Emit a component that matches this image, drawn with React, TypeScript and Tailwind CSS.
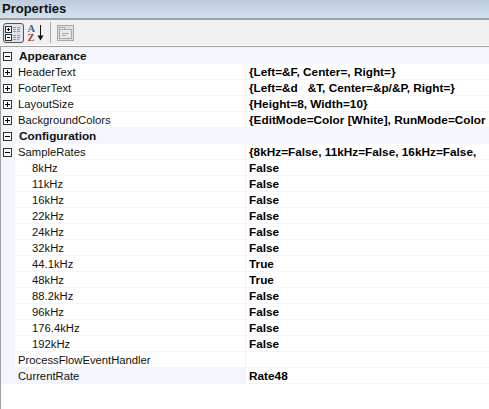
import React from "react";

const font = "[font-family:'Liberation_Sans',Arial,sans-serif]";

function Box({ open }: { open: boolean }) {
  return (
    <svg width="9" height="9" viewBox="0 0 9 9" className="block" shapeRendering="crispEdges">
      <rect x="0.5" y="0.5" width="8" height="8" fill="#fff" stroke="#333" />
      <path d={open ? "M2 4.5H7" : "M2 4.5H7M4.5 2V7"} stroke="#000" fill="none" />
    </svg>
  );
}

type Row = { kind: "cat" | "prop" | "sub"; name: string; value?: string; exp?: "open" | "closed" };

const rows: Row[] = [
  { kind: "cat", name: "Appearance", exp: "open" },
  { kind: "prop", name: "HeaderText", value: "{Left=&F, Center=, Right=}", exp: "closed" },
  { kind: "prop", name: "FooterText", value: "{Left=&d   &T, Center=&p/&P, Right=}", exp: "closed" },
  { kind: "prop", name: "LayoutSize", value: "{Height=8, Width=10}", exp: "closed" },
  { kind: "prop", name: "BackgroundColors", value: "{EditMode=Color [White], RunMode=Color", exp: "closed" },
  { kind: "cat", name: "Configuration", exp: "open" },
  { kind: "prop", name: "SampleRates", value: "{8kHz=False, 11kHz=False, 16kHz=False,", exp: "open" },
  { kind: "sub", name: "8kHz", value: "False" },
  { kind: "sub", name: "11kHz", value: "False" },
  { kind: "sub", name: "16kHz", value: "False" },
  { kind: "sub", name: "22kHz", value: "False" },
  { kind: "sub", name: "24kHz", value: "False" },
  { kind: "sub", name: "32kHz", value: "False" },
  { kind: "sub", name: "44.1kHz", value: "True" },
  { kind: "sub", name: "48kHz", value: "True" },
  { kind: "sub", name: "88.2kHz", value: "False" },
  { kind: "sub", name: "96kHz", value: "False" },
  { kind: "sub", name: "176.4kHz", value: "False" },
  { kind: "sub", name: "192kHz", value: "False" },
  { kind: "prop", name: "ProcessFlowEventHandler", value: "" },
  { kind: "prop", name: "CurrentRate", value: "Rate48" },
];

function GridRow({ row, last }: { row: Row; last: boolean }) {
  const gutter = (
    <div className="w-[14px] shrink-0 flex items-center pl-[2px]">
      {row.exp && <Box open={row.exp === "open"} />}
    </div>
  );
  if (row.kind === "cat") {
    return (
      <div className="h-[16px] flex items-center bg-[#f3f6fc] text-[#111] font-bold text-[11.8px] leading-[16px]">
        {gutter}
        <span className="pl-[4px]">{row.name}</span>
      </div>
    );
  }
  return (
    <div className="h-[16px] flex bg-[#f3f6fc] leading-[16px]">
      {gutter}
      <div
        className={`w-[230px] shrink-0 border-b truncate text-[#111] text-[11.25px] ${
          row.kind === "sub" ? "pl-[17px]" : "pl-[3px]"
        } ${last ? "bg-[#f3f6fc] border-transparent" : "bg-white border-[#f5f5f5]"}`}
      >
        {row.name}
      </div>
      <div className="w-[1px] shrink-0 bg-[#f1f1f1]" />
      <div className="flex-1 min-w-0 border-b border-[#f5f5f5] bg-white pl-[3px] font-bold text-[11.8px] text-black whitespace-pre overflow-hidden">
        {row.value}
      </div>
    </div>
  );
}

export default function App() {
  return (
    <div className={`w-[489px] h-[409px] bg-white overflow-hidden flex flex-col ${font}`}>
      <div className="h-[18px] bg-gradient-to-b from-[#bccadb] to-[#d3e2f0] pl-[2px] text-[13px] font-bold leading-[18px] text-[#111]">
        Properties
      </div>
      <div className="h-[2px] bg-[#a0a0a0]" />
      <div className="h-[25px] bg-[#f0f0f0] flex items-center pl-[3px]">
        <div className="w-[21px] h-[20px] rounded-[3px] border border-[#555] bg-[#dfe3ea] flex items-center justify-center">
          <svg width="17" height="16" viewBox="0 0 17 16" shapeRendering="crispEdges">
            <rect x="0.5" y="1.5" width="6" height="6" fill="#fff" stroke="#234" />
            <path d="M2 4.5H5M3.5 3V6" stroke="#000" />
            <rect x="0.5" y="9.5" width="6" height="6" fill="#fff" stroke="#234" />
            <path d="M2 12.5H5" stroke="#000" />
            <path d="M8 2.5H16M8 4.5H16M8 6.5H16M8 10.5H16M8 12.5H16M8 14.5H14" stroke="#7f9ab5" strokeDasharray="3 1" />
          </svg>
        </div>
        <svg width="18" height="20" viewBox="0 0 18 20" className="ml-[3px]">
          <text x="0.5" y="8.5" fontSize="10.5" fontWeight="bold" fill="#3a62b0" fontFamily="Liberation Serif">A</text>
          <text x="0.5" y="18" fontSize="10.5" fontWeight="bold" fill="#a33a3a" fontFamily="Liberation Serif">Z</text>
          <path d="M13.5 2V15" stroke="#111" strokeWidth="1" />
          <path d="M10.5 12.5L13.5 17.5L16.5 12.5Z" fill="#111" />
        </svg>
        <div className="w-[1px] h-[21px] bg-[#a8a8a8] ml-[5px]" />
        <svg width="17" height="16" viewBox="0 0 17 16" className="ml-[6px]" shapeRendering="crispEdges">
          <rect x="0.5" y="0.5" width="16" height="15" fill="#dcdcdc" stroke="#a8a8a8" />
          <rect x="2.5" y="2.5" width="5" height="2" fill="#eee" stroke="#aaa" />
          <rect x="2.5" y="4.5" width="12" height="9" fill="#e9e9e9" stroke="#aaa" />
          <path d="M5 8.5H12M5 10.5H9" stroke="#aaa" />
        </svg>
      </div>
      <div className="h-[1px] bg-white" />
      <div className="h-[1px] bg-[#a0a0a0]" />
      <div className="h-[1px] bg-[#f3f6fc] border-l-[1px] border-[#a0a0a0]" />
      <div className="border-l-[1px] border-[#a0a0a0]">
        {rows.map((r, i) => (
          <GridRow key={i} row={r} last={i === rows.length - 1} />
        ))}
      </div>
      <div className="flex-1 border-l-[1px] border-[#a0a0a0]" />
    </div>
  );
}
